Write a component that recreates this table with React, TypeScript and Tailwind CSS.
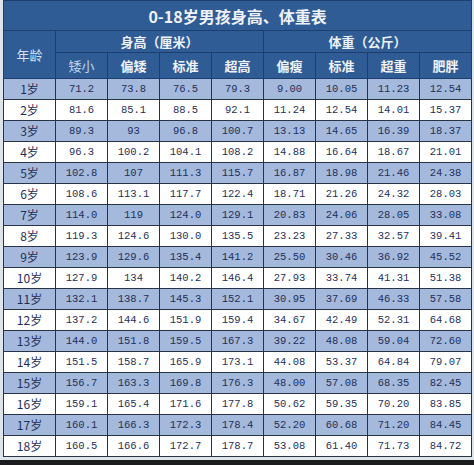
import React from "react";

type Row = [string, string, string, string, string, string, string, string, string];

const rows: Row[] = [
  ["1岁", "71.2", "73.8", "76.5", "79.3", "9.00", "10.05", "11.23", "12.54"],
  ["2岁", "81.6", "85.1", "88.5", "92.1", "11.24", "12.54", "14.01", "15.37"],
  ["3岁", "89.3", "93", "96.8", "100.7", "13.13", "14.65", "16.39", "18.37"],
  ["4岁", "96.3", "100.2", "104.1", "108.2", "14.88", "16.64", "18.67", "21.01"],
  ["5岁", "102.8", "107", "111.3", "115.7", "16.87", "18.98", "21.46", "24.38"],
  ["6岁", "108.6", "113.1", "117.7", "122.4", "18.71", "21.26", "24.32", "28.03"],
  ["7岁", "114.0", "119", "124.0", "129.1", "20.83", "24.06", "28.05", "33.08"],
  ["8岁", "119.3", "124.6", "130.0", "135.5", "23.23", "27.33", "32.57", "39.41"],
  ["9岁", "123.9", "129.6", "135.4", "141.2", "25.50", "30.46", "36.92", "45.52"],
  ["10岁", "127.9", "134", "140.2", "146.4", "27.93", "33.74", "41.31", "51.38"],
  ["11岁", "132.1", "138.7", "145.3", "152.1", "30.95", "37.69", "46.33", "57.58"],
  ["12岁", "137.2", "144.6", "151.9", "159.4", "34.67", "42.49", "52.31", "64.68"],
  ["13岁", "144.0", "151.8", "159.5", "167.3", "39.22", "48.08", "59.04", "72.60"],
  ["14岁", "151.5", "158.7", "165.9", "173.1", "44.08", "53.37", "64.84", "79.07"],
  ["15岁", "156.7", "163.3", "169.8", "176.3", "48.00", "57.08", "68.35", "82.45"],
  ["16岁", "159.1", "165.4", "171.6", "177.8", "50.62", "59.35", "70.20", "83.85"],
  ["17岁", "160.1", "166.3", "172.3", "178.4", "52.20", "60.68", "71.20", "84.45"],
  ["18岁", "160.5", "166.6", "172.7", "178.7", "53.08", "61.40", "71.73", "84.72"],
];

const sub = ["矮小", "偏矮", "标准", "超高", "偏瘦", "标准", "超重", "肥胖"];

const cjk = "font-['Noto_Sans_CJK_SC',sans-serif]";
const hd = "border border-[#1d3f70] bg-[#2f5c95] text-center";

export default function App() {
  return (
    <div className="flex h-[465px] w-[474px] flex-col bg-[#dfe3ea]">
      <div className="px-[3px]">
        <table className="w-[468px] table-fixed border-collapse">
          <colgroup>
            {Array.from({ length: 9 }).map((_, i) => (
              <col key={i} className="w-[52px]" />
            ))}
          </colgroup>
          <thead>
            <tr className="h-[30px]">
              <th
                colSpan={9}
                className={`${hd} ${cjk} text-[16px] font-bold text-[#eef2f8]`}
              >
                0-18岁男孩身高、体重表
              </th>
            </tr>
            <tr className="h-[22px]">
              <th
                rowSpan={2}
                className={`${hd} ${cjk} text-[13px] font-normal text-[#d6e0ee]`}
              >
                年龄
              </th>
              <th colSpan={4} className={`${hd} ${cjk} text-[13px] font-bold text-[#eef2f8]`}>
                身高（厘米）
              </th>
              <th colSpan={4} className={`${hd} ${cjk} text-[13px] font-bold text-[#eef2f8]`}>
                体重（公斤）
              </th>
            </tr>
            <tr className="h-[26px]">
              {sub.map((s, i) => (
                <th
                  key={i}
                  className={`${hd} ${cjk} text-[13px] ${
                    i === 0 ? "font-normal text-[#c3d2ea]" : "font-bold text-[#eef2f8]"
                  }`}
                >
                  {s}
                </th>
              ))}
            </tr>
          </thead>
          <tbody>
            {rows.map((r, ri) => (
              <tr
                key={ri}
                className={`h-[21px] ${ri % 2 === 0 ? "bg-[#a5b9dc]" : "bg-white"}`}
              >
                {r.map((c, ci) => (
                  <td
                    key={ci}
                    className={`border border-[#2a3346] p-0 text-center leading-none text-[#1f2f58] ${
                      ci === 0
                        ? `${cjk} text-[12px]`
                        : "font-['Liberation_Mono',monospace] text-[10.5px]"
                    }`}
                  >
                    {c}
                  </td>
                ))}
              </tr>
            ))}
          </tbody>
        </table>
      </div>
      <div className="flex-1" />
      <div className="h-[5px] bg-[#1c1c1e]" />
    </div>
  );
}
